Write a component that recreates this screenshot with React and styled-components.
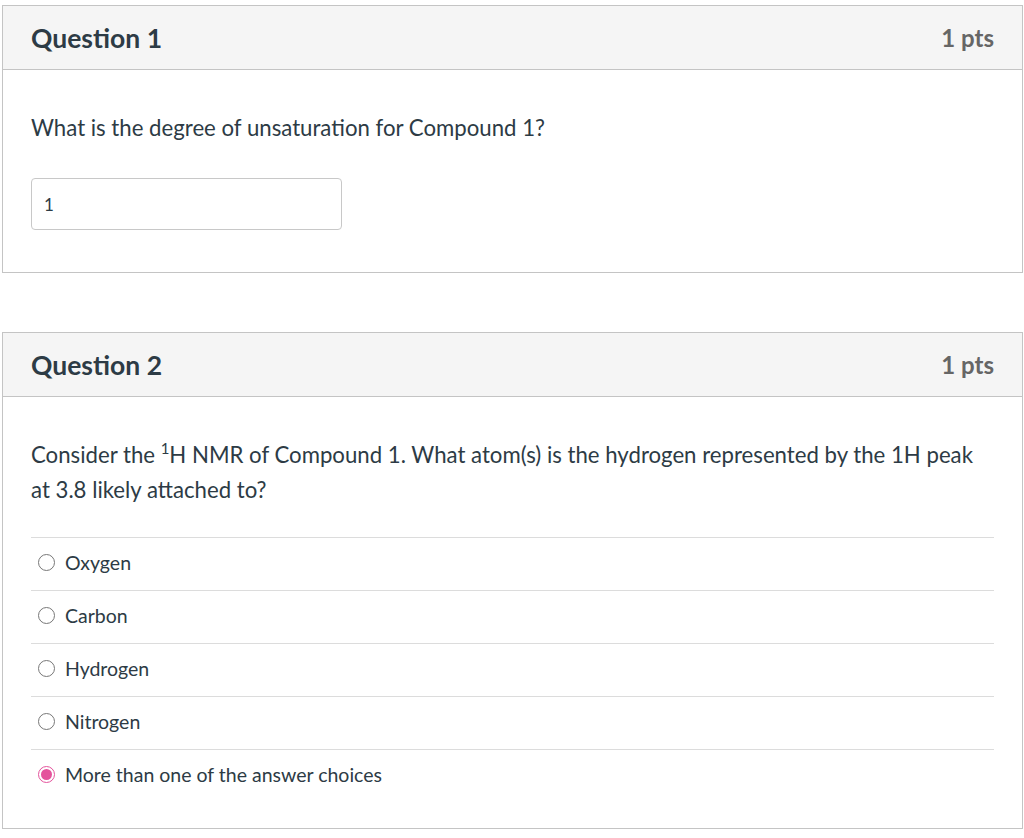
import styled, { createGlobalStyle } from "styled-components";

const GlobalStyle = createGlobalStyle`
  body {
    margin: 0;
    background: #fff;
    font-family: Lato, "Noto Sans", sans-serif;
    color: #2d3b45;
  }
`;

const Page = styled.main`
  padding: 5px 1px 8px 2px;
  display: flex;
  flex-direction: column;
  gap: 59px;
`;

const Card = styled.section`
  border: 1px solid #c4c4c4;
  background: #fff;
`;

const Header = styled.header`
  height: 63px;
  display: flex;
  justify-content: space-between;
  align-items: center;
  padding: 0 28px;
  background: #f5f5f5;
  border-bottom: 1px solid #c4c4c4;
`;

const Title = styled.h2`
  margin: 0;
  font-size: 26.5px;
  font-weight: 700;
  color: #2d3b45;
`;

const Points = styled.span`
  font-size: 24px;
  font-weight: 700;
  color: #666;
`;

const Body = styled.div`
  padding: 40px 28px ${(p) => p.$bottom || 42}px;
`;

const Text = styled.p`
  margin: 0;
  font-size: 22.2px;
  line-height: 35px;
  color: #2d3b45;

  sup {
    font-size: 15px;
    line-height: 0;
    vertical-align: 9px;
  }
`;

const Input = styled.input`
  display: block;
  box-sizing: border-box;
  margin-top: 33px;
  width: 311px;
  height: 52px;
  padding: 0 12px;
  border: 1px solid #c8c8c8;
  border-radius: 4px;
  font-family: inherit;
  font-size: 17px;
  color: #2d3b45;
`;

const Answers = styled.ul`
  list-style: none;
  margin: 30px 0 0;
  padding: 0;
`;

const Answer = styled.li`
  box-sizing: border-box;
  height: 53px;
  display: flex;
  align-items: center;
  gap: 10px;
  padding: 0 0 3px 7px;
  border-top: 1px solid #dcdcdc;
  font-size: 19.5px;
  color: #2d3b45;
`;

const Radio = styled.span`
  box-sizing: border-box;
  width: 17px;
  height: 17px;
  border-radius: 50%;
  border: 1px solid ${(p) => (p.$checked ? "#e4539c" : "#777")};
  display: flex;
  align-items: center;
  justify-content: center;
  background: #fff;

  &::after {
    content: "";
    width: 11px;
    height: 11px;
    border-radius: 50%;
    background: ${(p) => (p.$checked ? "#e4539c" : "transparent")};
  }
`;

const choices = ["Oxygen", "Carbon", "Hydrogen", "Nitrogen", "More than one of the answer choices"];

export default function App() {
  return (
    <>
      <GlobalStyle />
      <Page>
        <Card>
          <Header>
            <Title>Question 1</Title>
            <Points>1 pts</Points>
          </Header>
          <Body>
            <Text>What is the degree of unsaturation for Compound 1?</Text>
            <Input defaultValue="1" />
          </Body>
        </Card>

        <Card>
          <Header>
            <Title>Question 2</Title>
            <Points>1 pts</Points>
          </Header>
          <Body $bottom={26}>
            <Text>
              Consider the <sup>1</sup>H NMR of Compound 1. What atom(s) is the hydrogen represented by the 1H peak
              <br />
              at 3.8 likely attached to?
            </Text>
            <Answers>
              {choices.map((c, i) => (
                <Answer key={c}>
                  <Radio $checked={i === choices.length - 1} />
                  {c}
                </Answer>
              ))}
            </Answers>
          </Body>
        </Card>
      </Page>
    </>
  );
}
